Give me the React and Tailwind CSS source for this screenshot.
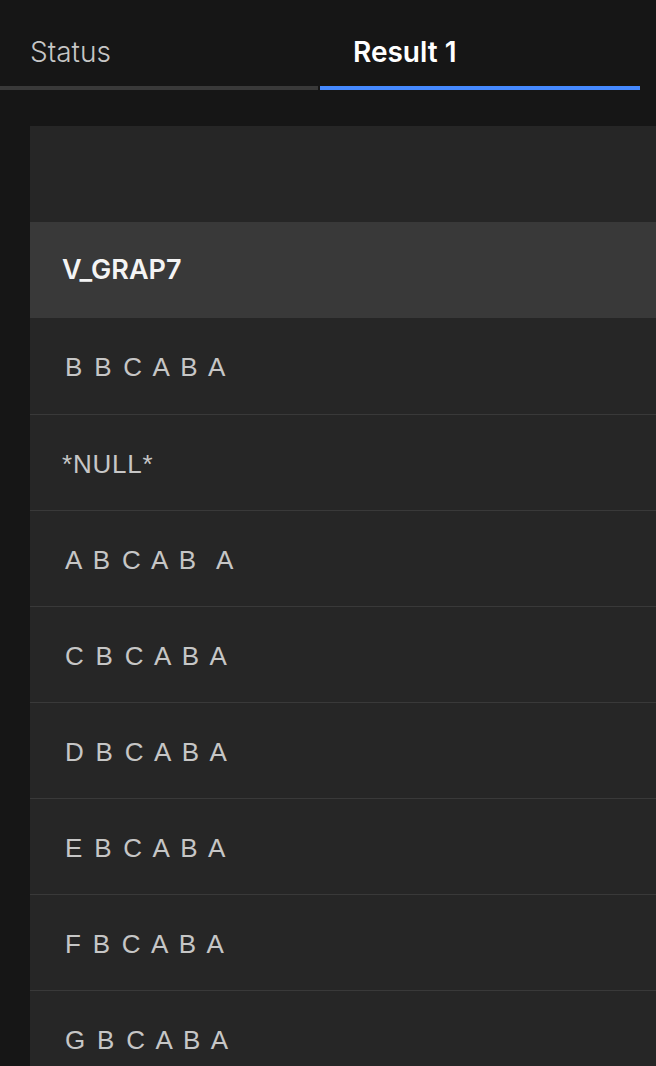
const rows = [
  'B B C A B A',
  '*NULL*',
  'A B C A B  A',
  'C B C A B A',
  'D B C A B A',
  'E B C A B A',
  'F B C A B A',
  'G B C A B A',
];

export default function App() {
  return (
    <div className="w-[656px] h-[1066px] overflow-hidden bg-[#161616] font-['Inter',sans-serif]">
      {/* Tabs */}
      <div className="flex h-[90px]">
        <div className="w-[318px] flex flex-col">
          <div className="flex-1 flex items-center pl-[30px] pt-[18px] text-[28px] text-[#c6c6c6] font-light">
            Status
          </div>
          <div className="h-[4px] bg-[#393939]" />
        </div>
        <div className="w-[2px]" />
        <div className="w-[320px] flex flex-col">
          <div className="flex-1 flex items-center pl-[33px] pt-[18px] text-[28px] text-white font-semibold">
            Result 1
          </div>
          <div className="h-[4px] bg-[#4589ff]" />
        </div>
      </div>

      {/* Table */}
      <div className="mt-[36px] ml-[30px] bg-[#262626]">
        <div className="h-[96px]" />
        <div className="h-[96px] bg-[#393939] flex items-center pl-[32px] text-[27px] font-semibold text-[#f4f4f4]">
          V_GRAP7
        </div>
        {rows.map((r, i) => (
          <div
            key={i}
            className={`h-[96px] flex items-center pt-[3px] whitespace-pre text-[26px] text-[#c6c6c6] font-['Liberation_Sans',sans-serif] ${
              r === '*NULL*' ? 'pl-[32px] tracking-[0.8px]' : 'pl-[35px] tracking-[2.3px]'
            } ${i > 0 ? 'border-t border-[#393939]' : ''}`}
          >
            {r}
          </div>
        ))}
      </div>
    </div>
  );
}
